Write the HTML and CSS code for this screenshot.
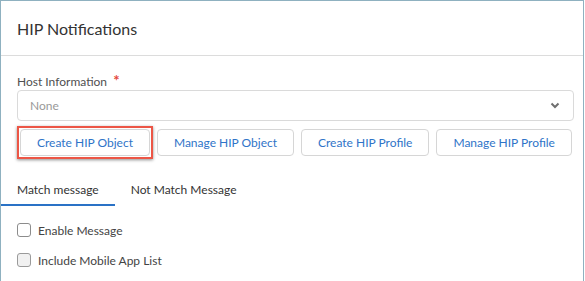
FILE: index.html
```html
<!DOCTYPE html>
<html lang="en">
<head>
    <meta charset="UTF-8">
    <meta name="viewport" content="width=device-width, initial-scale=1.0">
    <link rel="stylesheet" href="styles.css">
    <title>HIP Notifications</title>
</head>
<body>
    <div class="panel">
        <div class="panel-header">HIP Notifications</div>

        <div class="form-section">
            <label class="field-label" for="host">Host Information <span class="required">*</span></label>
            <div class="select" id="host">
                <span class="select-value">None</span>
                <svg class="chevron" width="10" height="7" viewBox="0 0 10 7">
                    <polyline points="1.5,1.5 5,5 8.5,1.5" fill="none" stroke="#6f6f6f" stroke-width="2"/>
                </svg>
            </div>

            <div class="button-row">
                <div class="highlight">
                    <button class="btn">Create HIP Object</button>
                </div>
                <button class="btn">Manage HIP Object</button>
                <button class="btn">Create HIP Profile</button>
                <button class="btn">Manage HIP Profile</button>
            </div>
        </div>

        <div class="tabs">
            <div class="tab active">Match message</div>
            <div class="tab">Not Match Message</div>
        </div>

        <div class="tab-content">
            <label class="check-row">
                <span class="checkbox"></span>
                Enable Message
            </label>
            <label class="check-row">
                <span class="checkbox disabled"></span>
                Include Mobile App List
            </label>
        </div>
    </div>
</body>
</html>
```

FILE: styles.css
```css
*{
    box-sizing: border-box;
}

body{
    margin: 0;
    background-color: #fff;
    font-family: "Lato", "Liberation Sans", sans-serif;
    color: #333;
}

.panel{
    width: 584px;
    height: 281px;
    border: 1px solid #8fb1c0;
    border-bottom: none;
    overflow: hidden;
}

.panel-header{
    height: 55px;
    padding: 0 16px;
    display: flex;
    align-items: center;
    font-size: 16px;
    color: #333;
    border-bottom: 1px solid #dcdcdc;
}

.form-section{
    padding: 16px 9px 0 16px;
}

.field-label{
    display: block;
    font-size: 12px;
    line-height: 16px;
    color: #4f4f4f;
}

.required{
    color: #e4473b;
    font-size: 15px;
    font-weight: bold;
    margin-left: 3px;
}

.select{
    height: 31px;
    padding: 0 12px;
    display: flex;
    align-items: center;
    justify-content: space-between;
    border: 1px solid #dadada;
    border-radius: 4px;
}

.select-value{
    font-size: 12px;
    color: #999;
}

.chevron{
    margin-right: 1px;
}

.button-row{
    display: flex;
    align-items: center;
    gap: 7px;
    margin-top: 8px;
    padding-left: 3px;
}

.highlight{
    flex-shrink: 0;
    margin: -3px;
    border: 2px solid #ec5646;
    padding: 1px;
    box-shadow: 0 1px 3px rgba(0, 0, 0, 0.45);
}

.btn{
    display: block;
    flex-shrink: 0;
    height: 27px;
    padding: 0 16px;
    font-family: inherit;
    font-size: 12px;
    white-space: nowrap;
    color: #2f74c8;
    background-color: #fff;
    border: 1px solid #d6d6d6;
    border-radius: 4px;
    cursor: pointer;
}

.tabs{
    display: flex;
    margin-top: 20px;
}

.tab{
    padding: 6px 16px;
    font-size: 12px;
    line-height: 16px;
    color: #333;
    border-bottom: 2px solid transparent;
}

.tab.active{
    border-bottom-color: #2a72c6;
}

.tab-content{
    padding: 9px 16px 0;
}

.check-row{
    display: flex;
    align-items: center;
    gap: 7px;
    height: 30px;
    font-size: 12px;
    color: #444;
}

.checkbox{
    width: 14px;
    height: 14px;
    border: 1px solid #8c8c8c;
    border-radius: 3px;
    background-color: #fff;
}

.checkbox.disabled{
    background-color: #f1f1f1;
    border-color: #9a9a9a;
}
```
